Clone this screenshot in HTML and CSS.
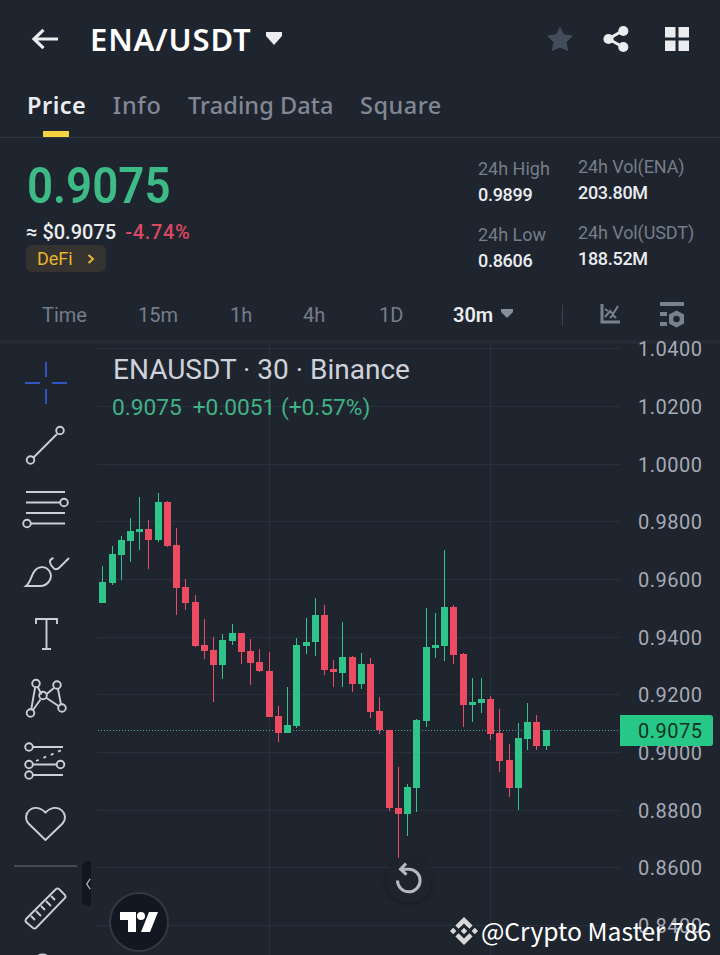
FILE: index.html
```html
<!DOCTYPE html>
<html lang="en">
<head>
  <meta charset="UTF-8" />
  <meta name="viewport" content="width=device-width, initial-scale=1.0" />
  <title>ENA/USDT</title>
  <link rel="stylesheet" href="styles.css">
</head>
<body>
  <header class="topbar">
    <svg class="back" viewBox="0 0 28 22"><path d="M27 11H3M12.500 1.800L3 11l9.500 9.200" /></svg>
    <h1>ENA/USDT</h1>
    <svg class="caret" viewBox="0 0 16 13"><path d="M0 0h16v4L8 13 0 4z" /></svg>
    <div class="actions">
      <svg class="star" viewBox="0 0 28 28"><path d="M14 2.200l3.500 7.500 8.700 1.300-6.300 6 1.700 8.500L14 22l-7.600 3.500 1.700-8.500-6.300-6 8.700-1.300z" /></svg>
      <svg class="share" viewBox="0 0 28 28"><path d="M21 5.500L6.500 14 21 22" /><circle cx="21.300" cy="6" r="5.100" /><circle cx="6.500" cy="14" r="5.100" /><circle cx="21.300" cy="22" r="5.100" /></svg>
      <svg class="apps" viewBox="0 0 24 24"><path d="M0 0h10.500v10.500H0zM13.500 0H24v10.500H13.500zM0 13.500h10.500V24H0zM13.500 13.500H24V24H13.500z" /></svg>
    </div>
  </header>

  <nav class="tabs">
    <a class="tab active">Price</a>
    <a class="tab info">Info</a>
    <a class="tab trading">Trading Data</a>
    <a class="tab">Square</a>
  </nav>

  <section class="summary">
    <div class="quote">
      <div class="last">0.9075</div>
      <div class="fiat"><span class="usd">≈ $0.9075</span><span class="change">-4.74%</span></div>
      <div class="tag"><span>DeFi</span><svg viewBox="0 0 8 10"><path d="M1.500 1L6 5 1.500 9" /></svg></div>
    </div>
    <div class="stats low-high">
      <div class="stat"><span>24h High</span><b>0.9899</b></div>
      <div class="stat"><span>24h Low</span><b>0.8606</b></div>
    </div>
    <div class="stats volume">
      <div class="stat"><span>24h Vol(ENA)</span><b>203.80M</b></div>
      <div class="stat"><span>24h Vol(USDT)</span><b>188.52M</b></div>
    </div>
  </section>

  <div class="intervals">
    <span>Time</span>
    <span>15m</span>
    <span>1h</span>
    <span>4h</span>
    <span>1D</span>
    <span class="active">30m <svg viewBox="0 0 12 9"><path d="M0 0h12v3L6 9 0 3z" /></svg></span>
    <i class="divider"></i>
    <svg class="ind" viewBox="0 0 20 20"><path d="M2 0v18h18" /><path class="thin" d="M5 13l5-6 3 3 5-8M5 5l3 2M10 14l3-3 3 3" /></svg>
    <svg class="config" viewBox="0 0 26 26"><path d="M1 0h24v4H1zM1 10h7v4H1zM1 20h7v4H1z" /><path fill-rule="evenodd" d="M17.500 8.500l7.500 4v9l-7.500 4-7.500-4v-9zM17.500 13.700a3.300 3.300 0 100 6.600 3.300 3.300 0 000-6.600z" /></svg>
  </div>

  <main class="chart">
    <aside class="tools">
      <svg class="tool cross" viewBox="0 0 48 48"><path d="M24 3v15M24 30v15M3 24h15M30 24h15" /></svg>
      <svg class="tool" viewBox="0 0 48 48"><path d="M11 36L35 12" /><circle cx="8.500" cy="38" r="3.800" /><circle cx="38" cy="8.500" r="3.800" /></svg>
      <svg class="tool" viewBox="0 0 48 48"><path d="M4 7h39M4 17.500h34M4 28h39M9 38.500h34" /><circle cx="42" cy="17.500" r="3.800" /><circle cx="5" cy="38.500" r="3.800" /></svg>
      <svg class="tool" viewBox="0 0 48 48"><path d="M4 38C9 34 9 27 13 22.500c4-5 11-4 14 0 5 7-1 15.500-9 15.500z" /><path d="M31.500 10c-6 2-3.500 7 .5 10.500 2 1.500 4 .5 6-1.500l9-9" /></svg>
      <svg class="tool" viewBox="0 0 48 48"><path d="M14 13V8h21v5M24.500 8v30M20 38h9" /></svg>
      <svg class="tool" viewBox="0 0 48 48"><path d="M9.200 35.500l4-22.500M11 36l7.500-10.500M15.500 12.500l4 8M24 20.500l8-6.500M36 15l3 15.500M24.500 24l12 8" /><circle cx="14" cy="9.500" r="3.800" /><circle cx="35" cy="11" r="3.800" /><circle cx="21" cy="21.500" r="3.800" /><circle cx="8.500" cy="39" r="3.800" /><circle cx="40" cy="34" r="3.800" /></svg>
      <svg class="tool" viewBox="0 0 48 48"><path d="M11 10h30M11 27.500h23M11 38h30" /><path class="dots" d="M14 24l26-11" /><circle cx="7" cy="10" r="3.800" /><circle cx="7" cy="27.500" r="3.800" /><circle cx="38.500" cy="27.500" r="3.800" /><circle cx="7" cy="38" r="3.800" /></svg>
      <svg class="tool" viewBox="0 0 48 48"><path d="M23.500 40L6.500 23.500c-8-9 5-23 17-11 12-12 25 2 17 11z" /></svg>
      <hr>
      <svg class="tool" viewBox="0 0 48 48"><path d="M4 34L34 4q1.500-1 3 0l6 6q1 1.500 0 3L14 43q-1.500 1-3 0l-7-6q-1-1.500 0-3zM9 31l4 4M14 26l5 5M19 21l4 4M24 16l5 5M29 11l4 4" /></svg>
      <svg class="tool" viewBox="0 0 48 48"><circle cx="20.500" cy="14.500" r="8" /></svg>
    </aside>
    <svg class="plot" id="plot" viewBox="98 340 622 615"></svg>

    <div class="legend">
      <div class="symbol">ENAUSDT · 30 · Binance</div>
      <div class="values"><span>0.9075</span><span>+0.0051 (+0.57%)</span></div>
    </div>
    <button class="collapse"><svg viewBox="0 0 8 14"><path d="M6 1L2 7l4 6" /></svg></button>
    <div class="tv">
      <svg viewBox="0 0 38 20"><path d="M0 0h16v20H8V8H0zM29 0h9l-8 20h-9z" /><circle cx="21" cy="4" r="4" /></svg>
    </div>
    <button class="reset"><svg viewBox="0 0 28 32"><path d="M2.500 18.500A11.300 11.300 0 1014 7.200H7M11 1.500L5.500 7.200l6 5.500" /></svg></button>
    <div class="watermark">
      <svg viewBox="0 0 28 28"><path d="M14 0l8.600 8.600-3.200 3.200L14 6.400l-5.400 5.400-3.200-3.200zM14 28l-8.600-8.600 3.200-3.200 5.400 5.400 5.400-5.400 3.200 3.200zM14 10.800l3.200 3.200-3.200 3.200-3.200-3.200zM3.200 10.800L6.400 14l-3.200 3.200L0 14zM24.800 10.800L28 14l-3.200 3.200-3.200-3.200z" /></svg>
      <span>@Crypto Master 786</span>
    </div>
  </main>

  <script src="chart.js"></script>
</body>
</html>
```
FILE: styles.css
```css
body {
  margin: 0;
  width: 720px;
  height: 955px;
  overflow: hidden;
  background: #1f252f;
  color: #eaecef;
  font-family: Roboto, "Liberation Sans", sans-serif;
}
svg {
  display: block;
  flex: none;
}
.topbar {
  display: flex;
  align-items: center;
  height: 77px;
  padding: 0 31px;
}
.back {
  width: 28px;
  height: 22px;
  fill: none;
  stroke: #eaecef;
  stroke-width: 3.2;
}
.topbar h1 {
  margin: 1px 0 0 31px;
  width: 176px;
  font-family: "Noto Sans", sans-serif;
  font-size: 31px;
  line-height: 40px;
  font-weight: 600;
  letter-spacing: 0.85px;
  color: #fff;
}
.caret {
  width: 16px;
  height: 13px;
  fill: #eaecef;
}
.actions {
  display: flex;
  align-items: center;
  margin-left: auto;
}
.star {
  width: 28px;
  height: 28px;
  margin-top: 1px;
  fill: #434c5a;
  stroke: #434c5a;
  stroke-width: 1;
  stroke-linejoin: round;
}
.share {
  width: 28px;
  height: 28px;
  margin: 0 35px 0 28px;
  fill: #eaecef;
}
.share path {
  fill: none;
  stroke: #eaecef;
  stroke-width: 3;
}
.apps {
  width: 24px;
  height: 24px;
  fill: #eaecef;
}
.tabs {
  display: flex;
  gap: 26.5px;
  height: 60px;
  padding-left: 27px;
  border-bottom: 1px solid #313842;
}
.tab {
  position: relative;
  font-family: "Noto Sans", sans-serif;
  font-size: 23.5px;
  line-height: 56px;
  font-weight: 500;
  letter-spacing: 0.5px;
  color: #818894;
}
.tab.info {
  letter-spacing: 0.7px;
}
.tab.trading {
  letter-spacing: 0.1px;
}
.tab.active {
  font-weight: 600;
  color: #eaecef;
}
.tab.active::after {
  content: "";
  position: absolute;
  left: 16px;
  bottom: 0;
  width: 26px;
  height: 6px;
  background: #f5d33f;
}
.summary {
  display: flex;
  height: 152px;
  padding-left: 26px;
}
.quote {
  width: 452px;
}
.last {
  margin: 20px 0 0 1px;
  font-size: 50.5px;
  line-height: 56px;
  font-weight: 600;
  color: #3dba86;
  transform: scaleX(0.905);
  transform-origin: left;
}
.fiat {
  display: flex;
  gap: 9px;
  margin-top: 6px;
  font-size: 20px;
  line-height: 24px;
  font-weight: 500;
}
.change {
  letter-spacing: 0.7px;
  color: #dc4860;
}
.tag {
  display: flex;
  align-items: center;
  gap: 14px;
  width: 69px;
  height: 27px;
  margin-top: 1px;
  padding-left: 11px;
  border-radius: 6px;
  background: #34332f;
  color: #e6b52d;
  font-size: 18px;
}
.tag svg {
  width: 8px;
  height: 10px;
  fill: none;
  stroke: #e6b52d;
  stroke-width: 2;
}
.stats {
  display: flex;
  flex-direction: column;
  gap: 14px;
  padding-top: 16px;
}
.stats.low-high {
  width: 100px;
  padding-top: 18px;
}
.stat {
  display: flex;
  flex-direction: column;
  height: 52px;
  font-size: 18px;
  line-height: 26px;
  color: #757d89;
  white-space: nowrap;
}
.volume .stat {
  letter-spacing: -0.1px;
}
.stat b {
  font-weight: 500;
  letter-spacing: -0.3px;
  color: #eaecef;
}
.intervals {
  display: grid;
  grid-template-columns: 96px 92px 73px 76px 74px 109px 38px 59px 26px;
  align-items: center;
  height: 50px;
  padding-left: 42px;
  font-size: 20px;
  color: #757d89;
}
.intervals .active {
  display: flex;
  align-items: center;
  gap: 8px;
  color: #eaecef;
  font-weight: 600;
}
.intervals .active svg {
  width: 12px;
  height: 9px;
  margin-top: -3px;
  fill: #848e9c;
}
.divider {
  width: 1px;
  height: 21px;
  background: #3a424d;
}
.ind {
  width: 20px;
  height: 20px;
  margin-top: -2px;
  fill: none;
  stroke: #78818f;
  stroke-width: 3;
}
.ind .thin {
  stroke-width: 2;
}
.config {
  width: 26px;
  height: 26px;
  fill: #78818f;
}
.chart {
  position: relative;
  display: flex;
  height: 615px;
  background: linear-gradient(#252b35 4px, transparent 4px);
}
.tools {
  display: flex;
  flex-direction: column;
  width: 98px;
  height: 615px;
  box-sizing: border-box;
  padding: 19px 0 0 22px;
  gap: 15px;
  overflow: hidden;
}
.tool {
  width: 48px;
  height: 48px;
  fill: none;
  stroke: #cbced6;
  stroke-width: 1.9;
}
.tool.cross {
  stroke: #3456c4;
}
.tool .dots {
  stroke-dasharray: 3 5;
}
.tools hr {
  flex: none;
  width: 63px;
  height: 2px;
  margin: 2px 0 3px -8px;
  border: 0;
  background: #444954;
}
.plot {
  width: 622px;
  height: 615px;
}
.grid {
  stroke: #2a303b;
}
.up {
  fill: #2fc58a;
}
.down {
  fill: #ec4b62;
}
.last-line {
  stroke: #4ca58a;
  stroke-dasharray: 1 2;
}
.axis {
  font-size: 20px;
  fill: #a6aab4;
}
.badge {
  fill: #27c887;
}
.badge-text {
  font-size: 20px;
  fill: #10331f;
}
.legend {
  position: absolute;
  left: 112px;
  top: 13px;
}
.symbol {
  padding-left: 1px;
  font-size: 28px;
  line-height: 34px;
  color: #cfd2da;
}
.values {
  display: flex;
  gap: 11px;
  margin-top: 8px;
  font-size: 22.7px;
  line-height: 26px;
  color: #42b184;
}
.collapse {
  position: absolute;
  left: 82px;
  top: 521px;
  width: 9px;
  height: 45px;
  padding: 0 0 0 3px;
  border: 0;
  border-radius: 6px 0 0 6px;
  background: #121620;
}
.collapse svg {
  width: 7px;
  height: 14px;
  fill: none;
  stroke: #b2b5be;
  stroke-width: 1.5;
}
.tv {
  position: absolute;
  left: 109px;
  top: 552px;
  display: flex;
  align-items: center;
  justify-content: center;
  width: 56px;
  height: 56px;
  border: 2px solid #343843;
  border-radius: 50%;
  background: #131722;
}
.tv svg {
  width: 38px;
  height: 20px;
  fill: #fff;
}
.reset {
  position: absolute;
  left: 386px;
  top: 517px;
  width: 46px;
  height: 46px;
  padding: 0 9px 5px;
  border: 0;
  border-radius: 50%;
  background: #1f232e;
  box-shadow: 0 1px 5px rgba(0, 0, 0, 0.35);
}
.reset svg {
  width: 28px;
  height: 32px;
  fill: none;
  stroke: #b6b8c1;
  stroke-width: 3;
}
.watermark {
  position: absolute;
  left: 450px;
  top: 573px;
  display: flex;
  align-items: center;
  gap: 3px;
  font-family: "Noto Sans CJK SC", sans-serif;
  font-size: 24.7px;
  line-height: 36px;
  color: #fff;
  white-space: nowrap;
}
.watermark svg {
  width: 28px;
  height: 28px;
  fill: #d9d9d9;
}
.watermark span {
  margin-top: -1px;
}
```
FILE: chart.js
```javascript
// x, high, low, body top, body bottom, up
const candles = [
  [99, 566, 603, 582, 603, 1], [109, 546, 585, 554, 583, 1], [118, 536, 580, 540, 555, 1],
  [127, 518, 562, 531, 541, 1], [136, 497, 550, 529, 532, 1], [145, 520, 569, 529, 540, 0],
  [155, 493, 542, 502, 540, 1], [164, 501, 547, 502, 546, 0], [173, 528, 615, 545, 588, 0],
  [182, 579, 610, 587, 603, 0], [192, 595, 647, 602, 646, 0], [201, 619, 659, 645, 651, 0],
  [210, 637, 702, 650, 665, 0], [219, 634, 679, 640, 665, 1], [229, 624, 645, 633, 641, 1],
  [238, 633, 664, 633, 652, 0], [247, 639, 685, 651, 663, 0], [256, 649, 672, 662, 671, 0],
  [266, 652, 717, 671, 717, 0], [275, 706, 742, 716, 733, 0], [284, 687, 733, 725, 733, 1],
  [293, 638, 728, 645, 726, 1], [303, 618, 654, 642, 646, 1], [312, 598, 656, 615, 642, 1],
  [321, 605, 675, 615, 670, 0], [330, 660, 687, 669, 672, 0], [339, 622, 687, 657, 673, 1],
  [349, 656, 692, 657, 684, 0], [358, 653, 689, 664, 684, 1], [367, 658, 718, 664, 712, 0],
  [376, 697, 734, 711, 730, 0], [386, 730, 811, 730, 808, 0], [395, 767, 858, 808, 814, 0],
  [404, 784, 836, 787, 814, 1], [413, 719, 812, 720, 788, 1], [423, 608, 727, 647, 721, 1],
  [432, 613, 658, 645, 648, 1], [441, 550, 661, 607, 646, 1], [450, 605, 664, 607, 655, 0],
  [460, 653, 727, 654, 705, 0], [469, 678, 722, 702, 705, 1], [478, 678, 713, 699, 703, 1],
  [487, 696, 740, 699, 734, 0], [496, 709, 772, 733, 761, 0], [506, 744, 797, 760, 788, 0],
  [515, 723, 810, 738, 788, 1], [524, 703, 750, 722, 739, 1], [533, 715, 750, 722, 746, 0],
  [543, 730, 750, 730, 746, 1]
];

let out = '';
for (let i = 0; i < 11; i++) {
  const y = Math.round(349.4 + i * 57.65);
  out += `<line class="grid" x1="98" x2="620" y1="${y - 0.5}" y2="${y - 0.5}" />`;
  out += `<text class="axis" x="638" y="${y + 7}" textLength="64">${(1.04 - i * 0.02).toFixed(4)}</text>`;
}
out += '<line class="grid" x1="269.5" x2="269.5" y1="340" y2="955" />';
out += '<line class="grid" x1="490.5" x2="490.5" y1="340" y2="955" />';
out += '<line class="last-line" x1="98" x2="620" y1="730.5" y2="730.5" />';

candles.forEach(([x, high, low, top, bottom, up]) => {
  const cls = up ? 'up' : 'down';
  out += `<rect class="${cls}" x="${x + 3}" y="${high}" width="1" height="${low - high}" />`;
  out += `<rect class="${cls}" x="${x}" y="${top}" width="7" height="${bottom - top}" />`;
});

out += '<path class="badge" d="M620 715h90q3 0 3 3v25q0 3-3 3h-90z" />';
out += '<text class="badge-text" x="638" y="738" textLength="64">0.9075</text>';
document.getElementById('plot').innerHTML = out;
```
